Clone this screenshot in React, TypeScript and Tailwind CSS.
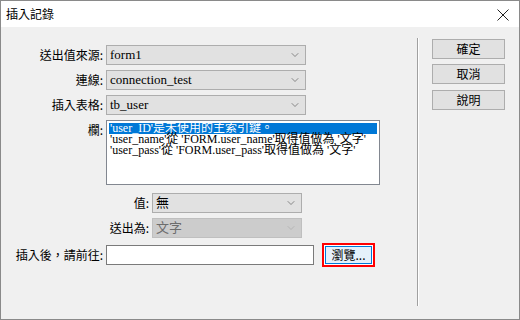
import { ChevronDown } from 'lucide-react';

const cjk = "font-['Noto_Sans_CJK_TC','Liberation_Sans',sans-serif]";
const serif = "font-['Liberation_Serif','Noto_Sans_CJK_TC',serif]";

function Select({ value, width, disabled = false }: { value: string; width: string; disabled?: boolean }) {
  return (
    <div
      className={`${width} h-[20px] flex items-center justify-between border pl-[3px] pr-[4px] ${
        disabled ? 'bg-[#cccccc] border-[#bfbfbf] text-[#6d6d6d]' : 'bg-[#e1e1e1] border-[#adadad] text-black'
      }`}
    >
      <span className={`${serif} text-[13px] leading-[16px]`}>{value}</span>
      <ChevronDown
        size={12}
        strokeWidth={1.3}
        className={disabled ? 'text-[#a8a8a8]' : 'text-[#555555]'}
      />
    </div>
  );
}

function Label({ text, width }: { text: string; width: string }) {
  return (
    <div className={`${width} shrink-0 text-right ${cjk} text-[12px] leading-[16px] text-black`}>{text}</div>
  );
}

export default function App() {
  return (
    <div className="w-[520px] h-[320px] border border-[#8a8a8a] flex flex-col bg-[#f0f0f0]">
      {/* Title bar */}
      <div className="h-[26px] bg-white flex items-center justify-between pl-[5px] pr-[10px]">
        <span className={`${cjk} text-[12px] leading-[16px] text-black`}>插入記錄</span>
        <svg width="12" height="12" viewBox="0 0 12 12" className="mt-[2px]">
          <path d="M0.5 0.5 L11.5 11.5 M11.5 0.5 L0.5 11.5" stroke="#222" strokeWidth="1" fill="none" />
        </svg>
      </div>

      {/* Body */}
      <div className="flex flex-1">
        {/* Form */}
        <div className="w-[416px] pt-[18px] flex flex-col">
          <div className="flex items-center gap-[3px]">
            <Label text="送出值來源:" width="w-[102px]" />
            <Select value="form1" width="w-[200px]" />
          </div>
          <div className="flex items-center gap-[3px] mt-[5px]">
            <Label text="連線:" width="w-[102px]" />
            <Select value="connection_test" width="w-[200px]" />
          </div>
          <div className="flex items-center gap-[3px] mt-[5px]">
            <Label text="插入表格:" width="w-[102px]" />
            <Select value="tb_user" width="w-[200px]" />
          </div>
          <div className="flex items-start gap-[3px] mt-[5px]">
            <div className="pt-[2px]">
              <Label text="欄:" width="w-[102px]" />
            </div>
            <div className="w-[274px] h-[65px] border border-[#828790] bg-white p-[2px]">
              <div className={`${serif} text-[12px] leading-[11px] text-black whitespace-nowrap`}>
                <div className="bg-[#0078d7] text-white pl-[1px] h-[11px]">'user_ID'是未使用的主索引鍵。</div>
                <div className="pl-[1px] h-[11px]">'user_name'從 'FORM.user_name'取得值做為 '文字'</div>
                <div className="pl-[1px] h-[11px]">'user_pass'從 'FORM.user_pass'取得值做為 '文字'</div>
              </div>
            </div>
          </div>
          <div className="flex items-center gap-[3px] mt-[8px]">
            <Label text="值:" width="w-[148px]" />
            <Select value="無" width="w-[150px]" />
          </div>
          <div className="flex items-center gap-[3px] mt-[5px]">
            <Label text="送出為:" width="w-[148px]" />
            <Select value="文字" width="w-[150px]" disabled />
          </div>
          <div className="flex items-center gap-[3px] mt-[5px]">
            <Label text="插入後，請前往:" width="w-[102px]" />
            <div className="w-[208px] h-[20px] bg-white border border-[#7a7a7a]" />
            <div className="ml-[5px] border-2 border-[#ff0000] p-[1px] bg-white">
              <button
                className={`w-[47px] h-[18px] border border-[#0078d7] bg-[#e5f1fb] ${cjk} text-[12px] leading-[14px] text-black flex items-center justify-center`}
              >
                瀏覽...
              </button>
            </div>
          </div>
        </div>

        {/* Separator */}
        <div className="w-[2px] mt-[11px] mb-[13px] border-l border-[#a0a0a0] bg-white" />

        {/* Buttons */}
        <div className="pl-[13px] pt-[12px] flex flex-col">
          {['確定', '取消', '說明'].map((t, i) => (
            <button
              key={t}
              className={`w-[73px] h-[20px] border border-[#adadad] bg-[#e1e1e1] ${cjk} text-[12px] leading-[16px] text-black flex items-center justify-center ${
                i === 0 ? '' : i === 1 ? 'mt-[5px]' : 'mt-[6px]'
              }`}
            >
              {t}
            </button>
          ))}
        </div>
      </div>
    </div>
  );
}
